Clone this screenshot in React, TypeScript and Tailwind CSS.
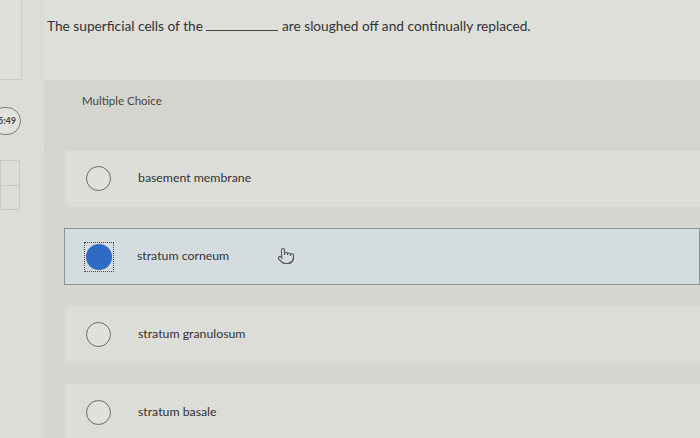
import { Pointer } from "lucide-react";

type Choice = {
  id: number;
  label: string;
  selected?: boolean;
};

const choices: Choice[] = [
  { id: 1, label: "basement membrane" },
  { id: 2, label: "stratum corneum", selected: true },
  { id: 3, label: "stratum granulosum" },
  { id: 4, label: "stratum basale" },
];

const App = () => {
  return (
    <div
      className="w-[700px] h-[438px] overflow-hidden bg-[#dcdcd9] flex text-[#3a3a3a]"
      style={{ fontFamily: "Lato, 'Open Sans', Arial, sans-serif" }}
    >
      {/* left rail */}
      <div className="w-[22px] shrink-0 flex flex-col">
        <div className="h-[80px] border-r border-b border-[#cbcbc8] bg-[#dfdfdc]" />
        <div className="mt-[27px] -ml-[10px] h-[28px] w-[31px] rounded-full border-[1.5px] border-[#7a7a78] bg-[#e2e2df] flex items-center justify-end pr-[4px]">
          <span className="text-[9px] font-bold text-[#444]">5:49</span>
        </div>
        <div className="mt-[25px] h-[50px] w-[20px] border border-[#c9c9c6] flex flex-col">
          <div className="h-[25px] border-b border-[#c9c9c6]" />
        </div>
      </div>

      {/* main */}
      <div className="ml-[22px] flex-1 flex flex-col">
        <div className="h-[80px] shrink-0 pl-[3px] pt-[17px] bg-[#dedeDB]">
          <p className="text-[13.7px] leading-[18px] text-[#333]">
            The superficial cells of the{" "}
            <span className="inline-block w-[72px] border-b border-[#444] align-baseline" />{" "}
            are sloughed off and continually replaced.
          </p>
        </div>

        <div className="flex-1 bg-[#d6d6d3]">
          <div className="pl-[38px] pt-[7px] h-[70px] bg-[#d4d4d1]">
            <span className="text-[11.5px] text-[#444]">Multiple Choice</span>
          </div>

          <div className="pl-[21px] flex flex-col gap-[21px]">
            {choices.map((choice) => (
              <div
                key={choice.id}
                className={
                  choice.selected
                    ? "relative h-[57px] flex items-center border border-[#8c9397] bg-[#d4dcdf] -ml-px"
                    : "h-[57px] flex items-center bg-[#dcdcd9]"
                }
              >
                {choice.selected ? (
                  <span className="ml-[19px] border border-dotted border-[#4a4a4a] p-[1px] flex">
                    <span className="w-[26px] h-[26px] rounded-full bg-[#2f6bc4]" />
                  </span>
                ) : (
                  <span className="ml-[21px] w-[25px] h-[25px] rounded-full border-[1.5px] border-[#6a6a6a] bg-[#e0e0dd]" />
                )}
                <span
                  className={
                    choice.selected
                      ? "ml-[23px] text-[12.3px] text-[#333]"
                      : "ml-[27px] text-[12.3px] text-[#333]"
                  }
                >
                  {choice.label}
                </span>
                {choice.selected && (
                  <Pointer className="absolute left-[212px] top-[18px] w-[18px] h-[18px] text-[#555]" strokeWidth={1.5} />
                )}
              </div>
            ))}
          </div>
        </div>
      </div>
    </div>
  );
};

export default App;
